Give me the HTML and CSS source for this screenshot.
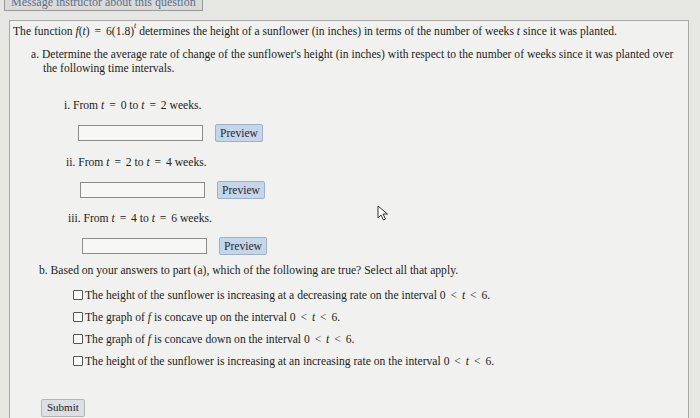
FILE: index.html
```html
<!DOCTYPE html>
<html>
<head>
<meta charset="utf-8">
<link rel="stylesheet" href="styles.css">
</head>
<body>
<div class="topbar"><span class="msgbtn">Message instructor about this question</span></div>
<div class="card">
  <p class="intro">The function <i class="m">f</i>(<i class="m">t</i>) <span class="op">=</span> 6(1.8)<sup class="m">t</sup> determines the height of a sunflower (in inches) in terms of the number of weeks <i class="m">t</i> since it was planted.</p>
  <div class="parta">
    <p class="qa"><span class="lbl">a.</span> Determine the average rate of change of the sunflower's height (in inches) with respect to the number of weeks since it was planted over the following time intervals.</p>
    <div class="sub s1">
      <p>i. From <i class="m">t</i> <span class="op">=</span> 0 to <i class="m">t</i> <span class="op">=</span> 2 weeks.</p>
      <div class="ansrow"><span class="inp"></span><span class="btn">Preview</span></div>
    </div>
    <div class="sub s2">
      <p>ii. From <i class="m">t</i> <span class="op">=</span> 2 to <i class="m">t</i> <span class="op">=</span> 4 weeks.</p>
      <div class="ansrow"><span class="inp"></span><span class="btn">Preview</span></div>
    </div>
    <div class="sub s3">
      <p>iii. From <i class="m">t</i> <span class="op">=</span> 4 to <i class="m">t</i> <span class="op">=</span> 6 weeks.</p>
      <div class="ansrow"><span class="inp"></span><span class="btn">Preview</span></div>
    </div>
  </div>
  <div class="partb">
    <p class="qb">b. Based on your answers to part (a), which of the following are true? Select all that apply.</p>
    <ul class="opts">
      <li><span class="cb"></span>The height of the sunflower is increasing at a decreasing rate on the interval 0 <span class="op">&lt;</span> <i class="m">t</i> <span class="op">&lt;</span> 6.</li>
      <li><span class="cb"></span>The graph of <i class="m">f</i> is concave up on the interval 0 <span class="op">&lt;</span> <i class="m">t</i> <span class="op">&lt;</span> 6.</li>
      <li><span class="cb"></span>The graph of <i class="m">f</i> is concave down on the interval 0 <span class="op">&lt;</span> <i class="m">t</i> <span class="op">&lt;</span> 6.</li>
      <li><span class="cb"></span>The height of the sunflower is increasing at an increasing rate on the interval 0 <span class="op">&lt;</span> <i class="m">t</i> <span class="op">&lt;</span> 6.</li>
    </ul>
  </div>
  <div class="submitrow"><span class="submit">Submit</span></div>
</div>
<svg class="cursor" width="12" height="16" viewBox="0 0 12 16"><path d="M1 1 L1 13 L4 10 L6.5 15 L8.5 14 L6 9 L10.5 9 Z" fill="#fff" stroke="#333" stroke-width="1"/></svg>
</body>
</html>
```
FILE: styles.css
```css
html, body { margin: 0; padding: 0; }
body {
  width: 700px; height: 418px; overflow: hidden;
  background: #e6e7e3;
  font-family: "Liberation Serif", "DejaVu Serif", serif;
  color: #1c1c1c;
  font-size: 11.6px;
  position: relative;
}
p { margin: 0; }
.topbar { height: 20px; padding-left: 4px; overflow: hidden; }
.msgbtn {
  display: inline-block;
  position: relative; top: -5px;
  padding: 0 6px 1px;
  border: 1px solid #9a9a9a;
  border-top: none;
  background: #dadbd8;
  color: #5a6e8a;
  font-size: 12px;
  line-height: 14px;
}
.card {
  margin-left: 9px;
  width: 680px;
  height: 400px;
  border: 1px solid #a8a8a6;
  border-bottom: none;
  background: #f1f2ef;
  box-sizing: border-box;
  padding: 3px 0 0 3px;
}
.intro { line-height: 16px; }
.m { font-style: italic; }
.op { padding: 0 2px; }
sup.m { font-size: 8px; vertical-align: 7px; line-height: 0; }
.parta { padding-left: 18px; margin-top: 8px; }
.qa { line-height: 14px; padding-left: 12px; text-indent: -12px; width: 640px; }
.sub p { line-height: 14px; }
.s1 { margin-left: 33px; margin-top: 23px; }
.s2 { margin-left: 35px; margin-top: 14px; }
.s3 { margin-left: 37px; margin-top: 13px; }
.ansrow { display: flex; align-items: center; gap: 12px; margin-top: 11px; margin-left: 14px; }
.inp {
  display: block; width: 125px; height: 16px;
  border: 1px solid #8c8c8c; background: #f7f7f5;
  box-sizing: border-box;
}
.btn {
  display: block; width: 48px; height: 18px; line-height: 17px;
  box-sizing: border-box; text-align: center;
  background: #c5d5ea; border: 1px solid #9fb1c8;
  border-radius: 2px;
  font-size: 11.6px; color: #2c2c2c;
}
.partb { padding-left: 26px; margin-top: 9px; }
.qb { line-height: 14px; }
.opts { list-style: none; margin: 0; padding: 0 0 0 34px; }
.opts li { line-height: 14px; margin-top: 8px; }
.opts li:first-child { margin-top: 11px; }
.cb {
  display: inline-block; width: 10px; height: 10px;
  border: 1px solid #555; background: #fafafa;
  box-sizing: border-box; margin-right: 2px; border-radius: 1px;
  vertical-align: -1px;
}
.submitrow { padding-left: 28px; margin-top: 30px; }
.submit {
  display: inline-block; padding: 1px 5px 2px; line-height: 13px;
  border: 1px solid #b5b5b5; background: #dcdfe3; border-radius: 2px;
  font-size: 11px;
}
.cursor { position: absolute; left: 377px; top: 205px; }
```
